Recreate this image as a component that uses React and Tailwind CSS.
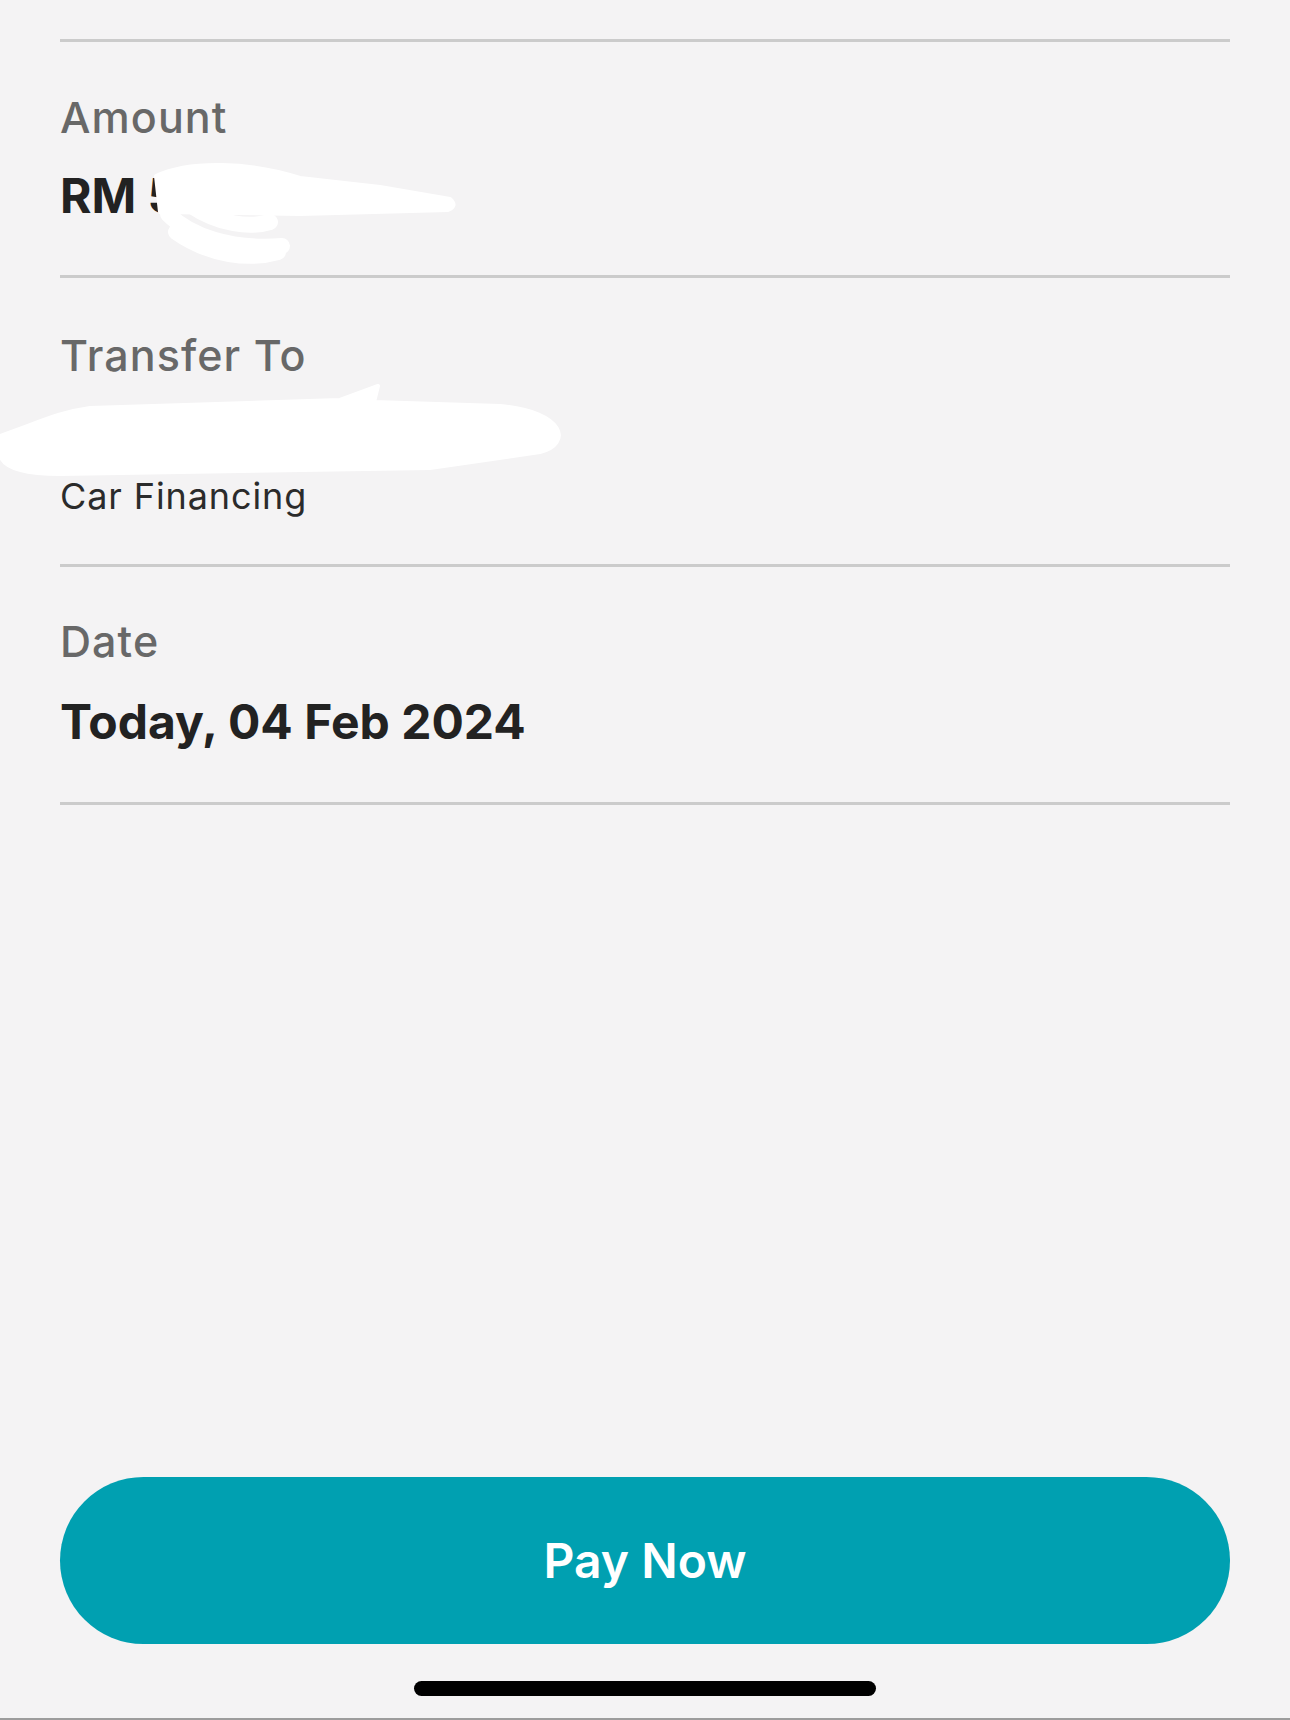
import React from "react";

const font = { fontFamily: "Inter, 'Noto Sans', sans-serif" };

function Row({ label, children, className = "" }) {
  return (
    <div className={`border-b-[3px] border-[#cbcbcb] ${className}`}>
      <div className="text-[43px] leading-[50px] font-medium tracking-wide text-[#686868]">{label}</div>
      {children}
    </div>
  );
}

export default function App() {
  return (
    <div style={font} className="relative h-[1720px] w-full bg-[#f4f3f4] flex flex-col border-b-2 border-[#9c9c9c] overflow-hidden">
      <div className="px-[60px] pt-[39px]">
        <div className="border-t-[3px] border-[#cbcbcb]" />
        <Row label="Amount" className="pt-[50px] pb-[50px]">
          <div className="mt-[25px] text-[48px] leading-[58px] font-bold text-[#222222]">RM 5</div>
        </Row>
        <Row label="Transfer To" className="pt-[52px] pb-[48px]">
          <div className="h-[96px]" />
          <div className="text-[36px] leading-[40px] tracking-wide text-[#2b2b2b]">Car Financing</div>
        </Row>
        <Row label="Date" className="pt-[49px] pb-[51px]">
          <div className="mt-[27px] text-[48px] leading-[58px] font-bold text-[#222222]">Today, 04 Feb 2024</div>
        </Row>
      </div>

      <div className="flex-1" />

      <div className="px-[60px]">
        <button className="w-full h-[167px] rounded-full bg-[#00a0b1] text-white text-[48px] font-semibold">
          Pay Now
        </button>
      </div>
      <div className="flex justify-center pt-[37px] pb-[22px]">
        <div className="w-[462px] h-[15px] rounded-full bg-black" />
      </div>

      {/* redaction scribbles drawn over the hidden values */}
      <svg className="pointer-events-none absolute inset-0" width="1290" height="1720" viewBox="0 0 1290 1720">
        <g fill="#ffffff" stroke="#ffffff" strokeLinejoin="round" strokeLinecap="round">
          <path strokeWidth="4" d="M156 176 C 190 160, 250 162, 300 178 L 380 187 L 450 199 Q 458 206 448 210 L 300 214 L 160 212 Z" />
          <path fill="none" strokeWidth="16" d="M168 214 C 190 236, 230 250, 282 246 M 176 232 C 210 256, 250 260, 278 252 M 190 205 C 220 225, 250 228, 270 222" />
          <path strokeWidth="4" d="M0 436 C 40 422, 60 412, 90 408 L 340 400 L 378 386 L 374 402 L 500 406 C 566 412, 572 444, 540 452 L 430 468 L 60 474 C 20 474, 0 466, 0 452 Z" />
        </g>
      </svg>
    </div>
  );
}
